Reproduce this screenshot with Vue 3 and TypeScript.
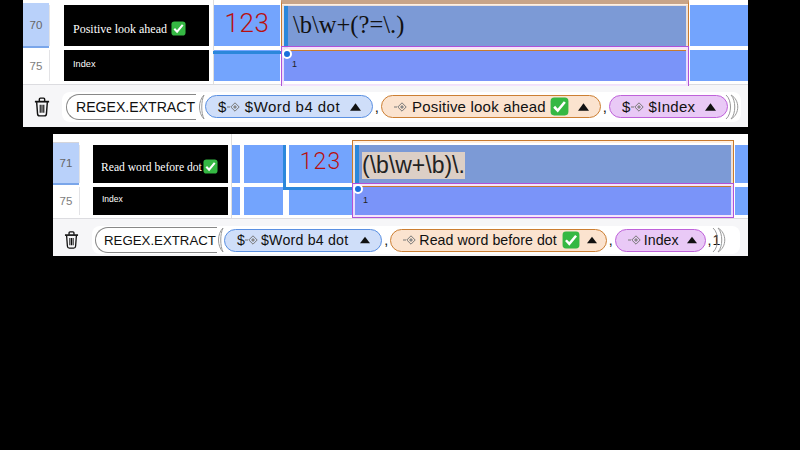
<script setup lang="ts">
interface Arg { prefix: string; label: string; check: boolean; tone: string; sep: string }
interface Panel {
  id: string
  rowNo: string
  title: string
  pattern: string
  mark: boolean
  blanks: number[]
  args: Arg[]
  tail: string
}
const panels: Panel[] = [
  {
    id: 'one', rowNo: '70', title: 'Positive look ahead', pattern: '\\b\\w+(?=\\.)', mark: false, blanks: [66],
    args: [
      { prefix: '$', label: '$Word b4 dot', check: false, tone: 'blue', sep: ',' },
      { prefix: '', label: 'Positive look ahead', check: true, tone: 'orange', sep: ',' },
      { prefix: '$', label: '$Index', check: false, tone: 'purple', sep: '' },
    ],
    tail: '',
  },
  {
    id: 'two', rowNo: '71', title: 'Read word before dot', pattern: '(\\b\\w+\\b)\\.', mark: true, blanks: [8, 39, 63],
    args: [
      { prefix: '$', label: '$Word b4 dot', check: false, tone: 'blue', sep: ',' },
      { prefix: '', label: 'Read word before dot', check: true, tone: 'orange', sep: ',' },
      { prefix: '', label: 'Index', check: false, tone: 'purple', sep: ',' },
    ],
    tail: '1',
  },
]
</script>

<template>
  <main class="page">
    <section v-for="p in panels" :key="p.id" class="panel" :class="p.id">
      <div class="sheet">
        <div class="head active">{{ p.rowNo }}</div>
        <div class="gutter"></div>
        <div class="name large">
          <span>{{ p.title }}</span>
          <svg class="tick" viewBox="0 0 16 16"><rect x="0.5" y="0.5" width="15" height="15" rx="3" fill="#35b843" /><path d="M3.5 8.2l3 3.2 6-7.2" fill="none" stroke="#fff" stroke-width="2.2" /></svg>
        </div>
        <div class="sep"></div>
        <div class="blanks">
          <div v-for="(w, i) in p.blanks" :key="i" class="blank" :class="'w' + w">
            <span v-if="i === p.blanks.length - 1" class="num">123</span>
          </div>
        </div>
        <div class="range top">
          <span class="pattern" :class="{ mark: p.mark }">{{ p.pattern }}</span>
        </div>
        <div class="blank end"></div>

        <div class="head">75</div>
        <div class="gutter"></div>
        <div class="name small">Index</div>
        <div class="sep"></div>
        <div class="blanks">
          <div v-for="(w, i) in p.blanks" :key="i" class="blank" :class="'w' + w"></div>
        </div>
        <div class="range bottom"><span class="one-val">1</span></div>
        <div class="blank end"></div>

        <div class="sel-h"></div>
        <div class="sel-v"></div>
        <div class="sel-left"></div>
        <div class="frame-o"></div>
        <div class="frame-p"></div>
        <div class="handle"></div>
      </div>

      <div class="bar">
        <svg class="trash" viewBox="0 0 18 22" fill="none" stroke="#111" stroke-width="1.6">
          <path d="M1 5h16" stroke-width="2" />
          <path d="M6 4.5V2.2c0-.7.5-1.2 1.2-1.2h3.6c.7 0 1.2.5 1.2 1.2v2.3" />
          <path d="M3 5.5l1 13.2c.1 1.3 1 2.3 2.3 2.3h5.4c1.3 0 2.2-1 2.3-2.3l1-13.2" />
          <path d="M7 8.5v9M9 8.5v9M11 8.5v9" stroke-width="1.3" />
        </svg>
        <div class="formula">
          <span class="fn">REGEX.EXTRACT</span>
          <svg class="paren" viewBox="0 0 8 26" fill="none" stroke="#999"><path d="M7 1C1 7 1 19 7 25" /><path d="M7 1C4 7 4 19 7 25" /></svg>
          <template v-for="a in p.args" :key="a.label">
            <span class="arg" :class="a.tone">
              <span v-if="a.prefix">{{ a.prefix }}</span>
              <svg class="dia" viewBox="0 0 13 10" fill="none" stroke="#777"><path d="M0 5h3" /><path d="M8 .8L12.2 5 8 9.2 3.8 5z" /><path d="M8 3l2 2-2 2-2-2z" fill="#888" stroke="none" /></svg>
              <span>{{ a.label }}</span>
              <svg v-if="a.check" class="tick big" viewBox="0 0 16 16"><rect x="0.5" y="0.5" width="15" height="15" rx="3" fill="#35b843" /><path d="M3.5 8.2l3 3.2 6-7.2" fill="none" stroke="#fff" stroke-width="2.2" /></svg>
              <svg class="tri" viewBox="0 0 12 8"><path d="M6 0l6 8H0z" fill="#111" /></svg>
            </span>
            <span v-if="a.sep" class="comma">{{ a.sep }}</span>
          </template>
          <span v-if="p.tail" class="tail">{{ p.tail }}</span>
          <svg class="close" viewBox="0 0 16 26" fill="none" stroke="#999"><path d="M1 1c6 5 6 19 0 24" /><path d="M6 1c9 5 9 19 0 24" /><path d="M6 1c5 5 5 19 0 24" /></svg>
        </div>
      </div>
    </section>
  </main>
</template>

<style scoped>
.page {
  width: 800px;
  height: 450px;
  background: #000;
  overflow: hidden;
  display: flex;
  flex-direction: column;
  align-items: flex-end;
  padding-right: 52px;
  box-sizing: border-box;
  gap: 7px;
  font-family: "Liberation Sans", Arial, sans-serif;
}
.panel { background: #fff; display: flex; flex-direction: column; overflow: hidden; }
.panel.one { width: 725px; height: 127px; }
.panel.two { width: 695px; height: 122px; }
.sheet { position: relative; display: grid; flex: none; z-index: 1; }
.one .sheet { grid-template-columns: 26px 15px 145px 5px 67px 408px 59px; grid-template-rows: 41px 31px; row-gap: 4px; padding: 5px 0 3px; }
.two .sheet { grid-template-columns: 26px 14px 135px 4px 120px 382px 14px; grid-template-rows: 38px 28px; row-gap: 4px; padding: 11px 0 3px; }
.head {
  display: flex; align-items: center; justify-content: center;
  color: #7d7d7d; font-size: 11.5px; background: #fff;
}
.head.active { background: #b9d1fa; border-bottom: 2px solid #7aa6ea; color: #666; margin: -2px 0 -2px; }
.two .head.active { margin-top: -3px; border-top: 1px solid #d5d5da; }
.gutter { border-left: 1px solid #e3e3e6; }
.name { background: #000; color: #fff; padding-left: 9px; display: flex; align-items: center; }
.name.large { font: 12px "Liberation Serif", serif; gap: 4px; padding-top: 8px; }
.name.small { font-size: 9.2px; padding-bottom: 4px; }
.two .name.large { font-size: 11.6px; padding-left: 8px; padding-top: 6px; gap: 1px; }
.two .name.small { font-size: 8.5px; padding-bottom: 4px; }
.tick { width: 15px; height: 15px; flex: none; margin-top: -2px; }
.tick.big { width: 19px; height: 19px; margin: 0 0 0 4px; }
.sep { border-left: 2px solid #fff; position: relative; }
.sep::after { content: ""; position: absolute; left: 2px; top: -11px; bottom: -3px; border-left: 1px solid #dedede; }
.two .sep::after { left: 1px; }
.blanks { display: flex; gap: 4px; }
.blank { background: #73a4fd; position: relative; display: flex; align-items: center; justify-content: center; }
.one .blank:not(.end) { width: 66px; }
.w8 { width: 8px; }
.w39 { width: 39px; }
.w63 { width: 63px; margin-left: 2px; }
.end { margin-left: 1px; }
.num { font-family: Roboto, "Liberation Sans", sans-serif; font-weight: 300; color: #b81010; font-size: 26px; letter-spacing: 0.6px; margin-top: -5px; }
.two .num { font-size: 23px; margin-top: -6px; letter-spacing: 1px; }
.range { display: flex; align-items: center; position: relative; }
.range.top { background: #7c9ad6; font-size: 24.5px; padding-left: 12px; }
.range.bottom { background: #7a94f9; padding-left: 11px; }
.two .range.top { padding-left: 10px; }
.pattern { font-family: "Liberation Serif", serif; color: #111; margin-top: -1px; }
.two .pattern { font-family: "Liberation Sans", Arial, sans-serif; font-size: 23px; color: #222; margin-top: 2px; }
.pattern.mark { background: #dccfc6; padding: 0; line-height: 27px; }
.one-val { font-size: 9px; color: #222; margin-bottom: 3px; }
.sel-h, .sel-v, .sel-left, .frame-o, .frame-p, .handle { position: absolute; }
.sel-h { background: #2b87db; height: 3px; }
.sel-v { background: #2b87db; width: 3px; }
.sel-left { background: #2b87db; }
.frame-o { border: 1px solid #c87a2e; box-sizing: border-box; box-shadow: inset 0 0 0 2px rgba(255, 236, 218, 0.85); }
.frame-p { border: 1px solid #b052d8; box-sizing: border-box; box-shadow: inset 0 0 0 2px rgba(244, 226, 252, 0.9); }
.handle { width: 6px; height: 6px; border-radius: 50%; background: #1a6fdc; border: 2px solid #fff; }
.one .sel-h { left: 190px; top: 51px; width: 68px; }
.one .sel-v { left: 261px; top: 5px; height: 47px; width: 4px; }
.one .sel-left { display: none; }
.one .frame-o { left: 258px; top: 0; width: 408px; height: 51px; border-top: 4px solid #c8a488; }
.one .frame-p { left: 258px; top: 46px; width: 408px; height: 40px; border-bottom: none; }
.one .handle { left: 259px; top: 49px; }
.two .sel-h { left: 230px; top: 53px; width: 70px; }
.two .sel-v { left: 302px; top: 11px; height: 43px; width: 4px; }
.two .sel-left { left: 230px; top: 11px; width: 3px; height: 45px; }
.two .frame-o { left: 299px; top: 6px; width: 382px; height: 47px; }
.two .frame-p { left: 299px; top: 49px; width: 382px; height: 35px; }
.two .handle { left: 300px; top: 50px; }
.bar {
  flex: 1; display: flex; align-items: center; gap: 12px;
  background: #f6f6f8; border-top: 1px solid #dcdce0; padding: 1px 8px 0 11px;
}
.two .bar { padding: 5px 8px 0 11px; gap: 13px; }
.trash { width: 16px; height: 20px; flex: none; }
.two .trash { width: 15px; height: 18px; }
.formula {
  flex: 1; height: 30px; background: #fff; border-radius: 8px;
  display: flex; align-items: center; color: #111; font-size: 15px; white-space: nowrap; letter-spacing: 0.3px;
}
.two .formula { font-size: 14.2px; height: 28px; letter-spacing: 0.2px; }
.fn {
  border: 1px solid #888; border-right: none; border-radius: 14px 0 0 14px;
  height: 24px; display: flex; align-items: center; padding: 0 1px 0 9px; margin-left: 4px;
  font-size: 14.1px; letter-spacing: 0;
}
.two .fn { margin-left: 3px; font-size: 13.26px; padding-left: 8px; }
.paren { width: 8px; height: 26px; flex: none; margin-left: 1px; }
.two .paren { margin-left: -1px; }
.arg {
  height: 21px; display: flex; align-items: center; padding: 0 11px 0 12px;
  border-radius: 12px; border: 1px solid; flex: none; box-sizing: content-box;
}
.blue { background: #cfdef9; border-color: #5a90e2; letter-spacing: 0.45px; }
.orange { background: #fbe3cf; border-color: #cc7f33; letter-spacing: 0.2px; }
.purple { background: #e9c9f6; border-color: #bf62da; }
.dia { width: 13px; height: 10px; flex: none; margin-right: 5px; }
.tri { width: 11px; height: 8px; flex: none; margin-left: 10px; }
.orange .tri { margin-left: 9px; }
.two .arg { padding-right: 10px; letter-spacing: 0.2px; }
.two .dia { margin-right: 3px; }
.two .tri { width: 10px; margin-left: 8px; }
.two .blue { padding-right: 11px; }
.two .blue .tri { margin-left: 12px; }
.two .orange { letter-spacing: 0.05px; padding-right: 9px; }
.two .orange .tri { margin-left: 7px; }
.two .purple { letter-spacing: 0; padding-right: 8px; }
.two .tick.big { width: 18px; height: 18px; margin-left: 5px; }
.comma { width: 8px; text-align: center; flex: none; }
.tail { margin-right: -6px; margin-left: -1px; }
.close { width: 16px; height: 26px; flex: none; margin-left: -3px; }
</style>
